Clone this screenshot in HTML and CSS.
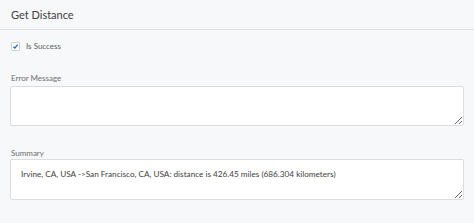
FILE: index.html
```html
<!DOCTYPE html>
<html lang="en">
<head>
    <meta charset="UTF-8">
    <title>Get Distance</title>
    <link rel="stylesheet" href="styles.css">
</head>
<body>
    <div class="card">
        <div class="card-header">Get Distance</div>
        <div class="card-body">
            <label class="check">
                <input type="checkbox" checked>
                <span class="check-box">
                    <svg viewBox="0 0 8 8"><path d="M1.6 4.3 L3.2 5.8 L6.4 1.9"/></svg>
                </span>
                <span>Is Success</span>
            </label>

            <div class="field">
                <label for="error">Error Message</label>
                <textarea id="error"></textarea>
            </div>

            <div class="field field-summary">
                <label for="summary">Summary</label>
                <textarea id="summary">Irvine, CA, USA -&gt;San Francisco, CA, USA: distance is 426.45 miles (686.304 kilometers)</textarea>
            </div>
        </div>
    </div>
</body>
</html>
```

FILE: styles.css
```css
/* Base */
* {
    box-sizing: border-box;
    margin: 0;
    padding: 0;
}

body {
    font-family: Lato, "Open Sans", sans-serif;
    background-color: #f7f8fa;
    color: #3e3e3c;
}

/* Header */
.card-header {
    height: 30px;
    line-height: 29px;
    padding-left: 11px;
    font-size: 11px;
    color: #3e3e3c;
    border-bottom: 1px solid #e2e3e6;
}

.card-body {
    padding: 0 10px;
}

/* Checkbox */
.check {
    display: flex;
    align-items: center;
    height: 12px;
    margin-top: 10px;
    font-size: 8px;
    color: #5b5d60;
    padding-left: 1px;
}

.check input {
    display: none;
}

.check-box {
    display: flex;
    width: 9px;
    height: 9px;
    border: 1px solid #cfd0d3;
    border-radius: 1px;
    background-color: #fff;
    margin-right: 6px;
}

.check-box svg {
    width: 7px;
    height: 7px;
    fill: none;
    stroke: #1a6dcc;
    stroke-width: 1.6;
}

/* Fields */
.field {
    display: flex;
    flex-direction: column;
    margin-top: 21px;
}

.field-summary {
    margin-top: 22px;
}

.field label {
    font-size: 8px;
    line-height: 10px;
    color: #6b6d70;
    padding-left: 1px;
    margin-bottom: 3px;
}

.field-summary label {
    margin-bottom: 1px;
}

textarea {
    height: 40px;
    width: 100%;
    background-color: #fff;
    border: 1px solid #dcdde0;
    border-radius: 2px;
    font-family: Lato, "Open Sans", sans-serif;
    font-size: 8.2px;
    line-height: 12px;
    color: #3e3e3c;
    padding: 8px 10px;
    outline: none;
}

.field-summary textarea {
    height: 41px;
}
```
